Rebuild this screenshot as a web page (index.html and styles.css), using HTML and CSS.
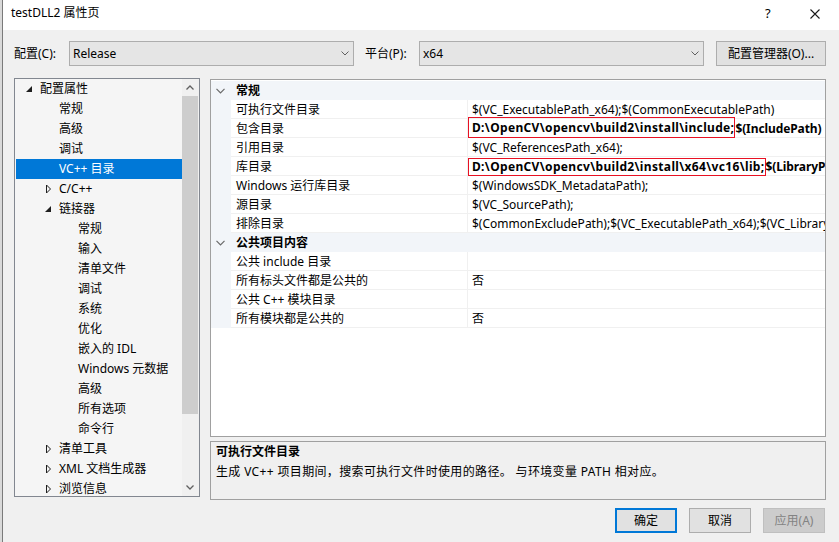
FILE: index.html
```html
<!DOCTYPE html>
<html>
<head>
<meta charset="utf-8">
<title>testDLL2 属性页</title>
<link rel="stylesheet" href="styles.css">
</head>
<body>
<div class="dialog">
  <div class="titlebar">
    <span class="title">testDLL2 属性页</span>
    <span class="help">?</span>
    <span class="close"><svg width="10" height="10" viewBox="0 0 10 10"><path d="M0.5 0.5L9.5 9.5M9.5 0.5L0.5 9.5" stroke="#1a1a1a" stroke-width="1.1" fill="none"/></svg></span>
  </div>

  <div class="toolbar">
    <span class="lbl lbl-config">配置(C):</span>
    <div class="combo">
      <span class="combo-text">Release</span>
      <svg class="combo-arrow" width="8" height="5" viewBox="0 0 8 5"><path d="M0.5 0.5L4 4L7.5 0.5" stroke="#606060" fill="none"/></svg>
    </div>
    <span class="lbl lbl-platform">平台(P):</span>
    <div class="combo">
      <span class="combo-text">x64</span>
      <svg class="combo-arrow" width="8" height="5" viewBox="0 0 8 5"><path d="M0.5 0.5L4 4L7.5 0.5" stroke="#606060" fill="none"/></svg>
    </div>
    <button class="btn btn-mgr">配置管理器(O)...</button>
  </div>

  <div class="main">
    <div class="tree">
      <div class="tree-list">
        <div class="node l0"><span class="tw"><svg width="8" height="8" viewBox="0 0 8 8"><path d="M7 1V7H1Z" fill="#1e1e1e"/></svg></span><span>配置属性</span></div>
        <div class="node l1"><span class="tw"></span><span>常规</span></div>
        <div class="node l1"><span class="tw"></span><span>高级</span></div>
        <div class="node l1"><span class="tw"></span><span>调试</span></div>
        <div class="node l1 selected"><span class="tw"></span><span>VC++ 目录</span></div>
        <div class="node l1"><span class="tw"><svg width="8" height="10" viewBox="0 0 8 10"><path d="M2.5 1V9L6.5 5Z" stroke="#1e1e1e" fill="none" stroke-linejoin="miter"/></svg></span><span>C/C++</span></div>
        <div class="node l1"><span class="tw"><svg width="8" height="8" viewBox="0 0 8 8"><path d="M7 1V7H1Z" fill="#1e1e1e"/></svg></span><span>链接器</span></div>
        <div class="node l2"><span class="tw"></span><span>常规</span></div>
        <div class="node l2"><span class="tw"></span><span>输入</span></div>
        <div class="node l2"><span class="tw"></span><span>清单文件</span></div>
        <div class="node l2"><span class="tw"></span><span>调试</span></div>
        <div class="node l2"><span class="tw"></span><span>系统</span></div>
        <div class="node l2"><span class="tw"></span><span>优化</span></div>
        <div class="node l2"><span class="tw"></span><span>嵌入的 IDL</span></div>
        <div class="node l2"><span class="tw"></span><span>Windows 元数据</span></div>
        <div class="node l2"><span class="tw"></span><span>高级</span></div>
        <div class="node l2"><span class="tw"></span><span>所有选项</span></div>
        <div class="node l2"><span class="tw"></span><span>命令行</span></div>
        <div class="node l1"><span class="tw"><svg width="8" height="10" viewBox="0 0 8 10"><path d="M2.5 1V9L6.5 5Z" stroke="#1e1e1e" fill="none"/></svg></span><span>清单工具</span></div>
        <div class="node l1"><span class="tw"><svg width="8" height="10" viewBox="0 0 8 10"><path d="M2.5 1V9L6.5 5Z" stroke="#1e1e1e" fill="none"/></svg></span><span>XML 文档生成器</span></div>
        <div class="node l1"><span class="tw"><svg width="8" height="10" viewBox="0 0 8 10"><path d="M2.5 1V9L6.5 5Z" stroke="#1e1e1e" fill="none"/></svg></span><span>浏览信息</span></div>
      </div>
      <div class="vscroll">
        <div class="sb-btn"><svg width="8" height="5" viewBox="0 0 8 5"><path d="M0.5 4.5L4 1L7.5 4.5" stroke="#606060" stroke-width="1.3" fill="none"/></svg></div>
        <div class="sb-thumb"></div>
        <div class="sb-track"></div>
        <div class="sb-btn"><svg width="8" height="5" viewBox="0 0 8 5"><path d="M0.5 0.5L4 4L7.5 0.5" stroke="#606060" stroke-width="1.3" fill="none"/></svg></div>
      </div>
    </div>

    <div class="right">
      <div class="grid">
        <div class="cat"><span class="gut"><svg width="9" height="6" viewBox="0 0 9 6"><path d="M0.5 0.8L4.5 4.8L8.5 0.8" stroke="#6a6a6a" stroke-width="1.2" fill="none"/></svg></span><span class="cat-name">常规</span></div>
        <div class="prop"><span class="gut"></span><span class="pname">可执行文件目录</span><span class="pval">$(VC_ExecutablePath_x64);$(CommonExecutablePath)</span></div>
        <div class="prop"><span class="gut"></span><span class="pname">包含目录</span><span class="pval hlcell"><span class="hl hl-a">D:\OpenCV\opencv\build2\install\include;</span><b>$(IncludePath)</b></span></div>
        <div class="prop"><span class="gut"></span><span class="pname">引用目录</span><span class="pval">$(VC_ReferencesPath_x64);</span></div>
        <div class="prop"><span class="gut"></span><span class="pname">库目录</span><span class="pval hlcell"><span class="hl hl-b">D:\OpenCV\opencv\build2\install\x64\vc16\lib;</span><b>$(LibraryPath)</b></span></div>
        <div class="prop"><span class="gut"></span><span class="pname">Windows 运行库目录</span><span class="pval">$(WindowsSDK_MetadataPath);</span></div>
        <div class="prop"><span class="gut"></span><span class="pname">源目录</span><span class="pval">$(VC_SourcePath);</span></div>
        <div class="prop"><span class="gut"></span><span class="pname">排除目录</span><span class="pval">$(CommonExcludePath);$(VC_ExecutablePath_x64);$(VC_LibraryPath_x64)</span></div>
        <div class="cat"><span class="gut"><svg width="9" height="6" viewBox="0 0 9 6"><path d="M0.5 0.8L4.5 4.8L8.5 0.8" stroke="#6a6a6a" stroke-width="1.2" fill="none"/></svg></span><span class="cat-name">公共项目内容</span></div>
        <div class="prop"><span class="gut"></span><span class="pname">公共 include 目录</span><span class="pval"></span></div>
        <div class="prop"><span class="gut"></span><span class="pname">所有标头文件都是公共的</span><span class="pval">否</span></div>
        <div class="prop"><span class="gut"></span><span class="pname">公共 C++ 模块目录</span><span class="pval"></span></div>
        <div class="prop"><span class="gut"></span><span class="pname">所有模块都是公共的</span><span class="pval">否</span></div>
      </div>
      <div class="desc">
        <div class="desc-title">可执行文件目录</div>
        <div class="desc-text">生成 VC++ 项目期间，搜索可执行文件时使用的路径。 与环境变量 PATH 相对应。</div>
      </div>
    </div>
  </div>

  <div class="footer">
    <button class="btn btn-ok">确定</button>
    <button class="btn">取消</button>
    <button class="btn btn-disabled">应用(A)</button>
  </div>
</div>
</body>
</html>
```

FILE: styles.css
```css
* {
  box-sizing: border-box;
  margin: 0;
  padding: 0;
}

html, body {
  width: 839px;
  height: 542px;
  overflow: hidden;
}

body {
  background: #d9d9d9;
  font-family: "Noto Sans", "Noto Sans CJK SC", sans-serif;
  font-size: 12px;
  color: #000;
}

.dialog {
  margin-left: 2px;
  border-left: 1px solid #7a7a7a;
  height: 542px;
  background: #f0f0f0;
}

/* title bar */
.titlebar {
  height: 30px;
  background: #fff;
  display: flex;
  align-items: flex-start;
  padding: 5px 19px 0 8px;
  line-height: 16px;
}

.help {
  margin-left: auto;
  font-size: 13px;
  width: 7px;
}

.close {
  margin-left: 38px;
  margin-top: 4px;
  width: 10px;
  height: 10px;
  display: flex;
}

/* toolbar */
.toolbar {
  height: 48px;
  padding: 11px 0 0 11px;
  display: flex;
  align-items: flex-start;
}

.lbl {
  line-height: 25px;
  height: 25px;
}

.lbl-config {
  width: 55px;
}

.lbl-platform {
  width: 54px;
  margin-left: 11px;
}

.combo {
  width: 285px;
  height: 25px;
  background: #e5e5e5;
  border: 1px solid #adadad;
  display: flex;
  align-items: center;
  padding: 0 4px 0 3px;
}

.combo-text {
  flex: 1;
  line-height: 23px;
}

.combo-arrow {
  display: block;
}

.btn {
  font-family: inherit;
  font-size: 12px;
  color: #000;
  background: #e1e1e1;
  border: 1px solid #adadad;
  height: 25px;
  width: 62px;
  line-height: 23px;
  text-align: center;
}

.btn-mgr {
  width: 110px;
  margin-left: 12px;
}

/* main area */
.main {
  height: 422px;
  padding-left: 11px;
  display: flex;
  align-items: flex-start;
}

.tree {
  width: 186px;
  height: 419px;
  border: 1px solid #828790;
  background: #f5f5f5;
  display: flex;
  overflow: hidden;
}

.tree-list {
  width: 167px;
  padding-left: 1px;
  overflow: hidden;
}

.node {
  height: 20px;
  display: flex;
  align-items: center;
  white-space: nowrap;
  line-height: 20px;
}

.node.l0 { padding-left: 8px; }
.node.l1 { padding-left: 27px; }
.node.l2 { padding-left: 46px; }

.tw {
  width: 16px;
  height: 20px;
  flex: none;
  display: flex;
  align-items: center;
  padding-left: 1px;
}

.tw svg {
  display: block;
}

.node.selected {
  background: #0078d7;
  color: #fff;
}

.vscroll {
  width: 17px;
  display: flex;
  flex-direction: column;
  background: #f0f0f0;
}

.sb-btn {
  height: 17px;
  display: flex;
  align-items: center;
  justify-content: center;
  padding-right: 1px;
}

.sb-thumb {
  height: 318px;
  background: #cdcdcd;
  margin-right: 1px;
}

.sb-track {
  flex: 1;
}

.right {
  width: 616px;
  margin-left: 10px;
}

/* property grid */
.grid {
  margin-top: 1px;
  height: 358px;
  border: 1px solid #a0a0a0;
  background: #fff;
  overflow: hidden;
  padding-top: 1px;
}

.cat {
  height: 19px;
  display: flex;
  align-items: flex-start;
  background: #f2f5f9;
  border-bottom: 1px solid #f2f5f9;
}

.gut {
  width: 20px;
  height: 19px;
  flex: none;
  background: #f2f5f9;
  display: flex;
  align-items: center;
  padding-left: 5px;
  padding-top: 1px;
}

.cat .gut {
  height: 18px;
}

.cat-name {
  font-weight: bold;
  padding-left: 5px;
  padding-top: 1px;
  line-height: 18px;
}

.prop {
  height: 19px;
  display: flex;
}

.pname {
  width: 237px;
  height: 19px;
  flex: none;
  padding-left: 5px;
  padding-top: 1px;
  border-right: 1px solid #f0f0f0;
  border-bottom: 1px solid #f0f0f0;
  line-height: 17px;
  white-space: nowrap;
}

.pval {
  flex: 1;
  min-width: 0;
  height: 19px;
  padding-left: 4px;
  padding-top: 1px;
  border-bottom: 1px solid #f0f0f0;
  line-height: 17px;
  white-space: nowrap;
  display: flex;
  align-items: flex-start;
}

.pval.hlcell {
  padding-left: 0;
  padding-top: 0;
  line-height: 19px;
}

.pval b {
  font-weight: bold;
  letter-spacing: -0.1px;
}

.hl {
  font-weight: bold;
  letter-spacing: 0.34px;
  border: 1px solid #e81123;
  padding-left: 3px;
  flex: none;
}

.hl-a {
  margin-top: -2px;
  height: 21px;
  line-height: 20px;
}

.hl-b {
  margin-top: 1px;
  height: 18px;
  line-height: 16px;
}

/* description */
.desc {
  margin-top: 4px;
  height: 59px;
  border: 1px solid #a0a0a0;
  background: #f0f0f0;
  padding-left: 5px;
}

.desc-title {
  font-weight: bold;
  line-height: 20px;
}

.desc-text {
  line-height: 20px;
  letter-spacing: 0.35px;
}

/* footer */
.footer {
  margin-top: 8px;
  display: flex;
  justify-content: flex-end;
  gap: 12px;
  padding-right: 14px;
}

.btn-ok {
  border: 2px solid #0078d7;
  line-height: 21px;
}

.btn-disabled {
  background: #cccccc;
  border-color: #bfbfbf;
  color: #838383;
}
```
